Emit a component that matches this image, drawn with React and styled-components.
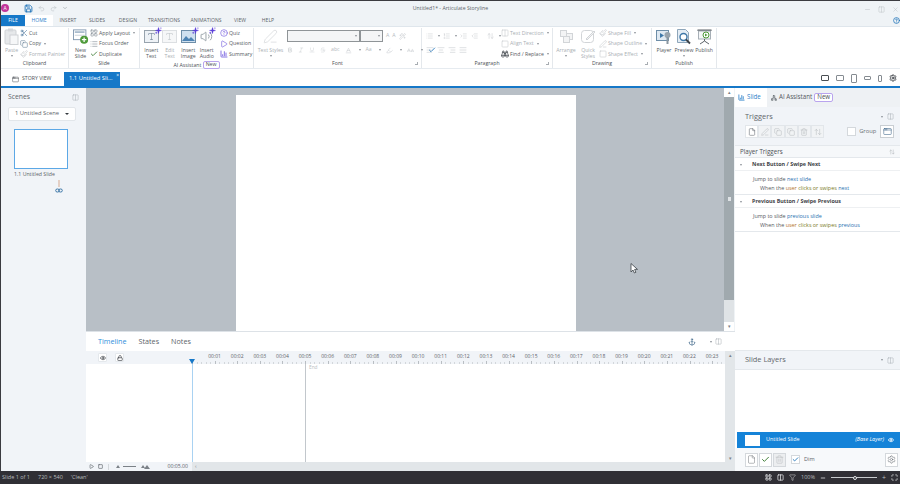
import styled, { createGlobalStyle } from "styled-components"
import {
  Scissors, Copy, Save, Undo2, Redo2, ChevronDown, Check, Eye, Lock,
  File, Trash2, Settings, Play, Square, Maximize, LayoutGrid, Columns2, Filter,
  Anchor, X, Minus, HelpCircle, Wand2, Network,
  Bold, Italic, Underline, Strikethrough, AlignLeft, AlignCenter, AlignRight, AlignJustify,
  List, ListOrdered, Binoculars, ArrowUpDown, Sparkles, PenLine, Volume2,
  Type, BarChart3, AppWindow, Paintbrush, Indent, Outdent, Baseline, Highlighter, ALargeSmall,
} from "lucide-react"

const GlobalStyle = createGlobalStyle`
  html, body { margin: 0; padding: 0; height: 484px; overflow: hidden; background: #302f35; }
  body { font-family: "Open Sans", "Liberation Sans", sans-serif; color: #55595e; }
  * { box-sizing: border-box; }
`

const TABS = [
  ["INSERT", 30], ["SLIDES", 28], ["DESIGN", 34], ["TRANSITIONS", 38],
  ["ANIMATIONS", 46], ["VIEW", 22], ["HELP", 34],
]
const SECONDS = Array.from({ length: 23 }, (_, i) => `00:${String(i + 1).padStart(2, "0")}`)
const DEVICES = [[8, 6], [8, 6], [6, 9], [7, 4], [4, 7]]

const OFF = "#c3c7cb"

const Ic = ({ as: I, c = "#6b7177", s = 8, w = 1.6 }) => <I size={s} color={c} strokeWidth={w} />

const SparkIcon = ({ children }) => (
  <IconBox>
    {children}
    <Spark><Sparkles size={7} color="#5a3fd8" fill="#5a3fd8" strokeWidth={1} /></Spark>
  </IconBox>
)

const PasteIcon = () => (
  <svg width="15" height="17" viewBox="0 0 15 17">
    <rect x="1" y="2" width="11" height="14" rx="1" fill="#e6e8ea" stroke="#cfd2d5" />
    <rect x="4" y="0.5" width="5" height="3" fill="#d5d8db" />
    <rect x="6" y="7" width="8" height="9.5" fill="#f6f7f8" stroke="#cfd2d5" />
  </svg>
)

const NewSlideIcon = () => (
  <svg width="16" height="16" viewBox="0 0 18 17">
    <rect x="0.5" y="0.5" width="14" height="11" fill="#fff" stroke="#7d95ad" />
    <rect x="2" y="2" width="11" height="2" fill="#a9bccd" />
    <rect x="2" y="6" width="11" height="1" fill="#c5ced6" />
    <circle cx="12.5" cy="11.5" r="4.5" fill="#4e9a3a" />
    <path d="M12.5 9v5M10 11.5h5" stroke="#fff" strokeWidth="1.4" />
  </svg>
)

const InsertImageIcon = () => (
  <svg width="15" height="13" viewBox="0 0 15 13">
    <rect x="0.5" y="0.5" width="14" height="12" fill="#cfe0ef" stroke="#6e8ea8" />
    <path d="M1 11l4-5 3 3 2-2 4 4z" fill="#4d83b3" />
  </svg>
)

const ArrangeIcon = () => (
  <svg width="13" height="13" viewBox="0 0 13 13" fill="#f3f4f5" stroke="#d2d5d8">
    <rect x="0.5" y="0.5" width="6" height="6" />
    <rect x="6.5" y="3.5" width="6" height="6" />
    <rect x="3.5" y="6.5" width="6" height="6" />
  </svg>
)

const QuickStylesIcon = () => (
  <svg width="15" height="15" viewBox="0 0 15 15" fill="none" stroke="#d2d5d8">
    <rect x="0.5" y="1.5" width="12" height="12" rx="3" />
    <path d="M5 10l8-8 1 1-8 8z" fill="#f3f4f5" />
  </svg>
)

const PlayerIcon = () => (
  <svg width="16" height="16" viewBox="0 0 16 16">
    <rect x="0.5" y="1.5" width="12" height="10" fill="#dfe9f2" stroke="#6e8ea8" />
    <path d="M4 4l4 2.5-4 2.5z" fill="#3f78a8" />
    <circle cx="11.5" cy="6" r="3" fill="#97a3ad" />
    <rect x="10.5" y="8" width="2" height="7" fill="#8b97a1" />
  </svg>
)

const PreviewIcon = () => (
  <svg width="16" height="16" viewBox="0 0 16 16">
    <path d="M1.5 0.5h8l3 3v10h-11z" fill="#e4edf5" stroke="#8ea6ba" />
    <circle cx="7.5" cy="8" r="3.5" fill="#fff" stroke="#3f78a8" strokeWidth="1.4" />
    <path d="M10 10.5l4 4" stroke="#3e4348" strokeWidth="1.8" />
  </svg>
)

const PublishIcon = () => (
  <svg width="15" height="16" viewBox="0 0 15 16">
    <rect x="0.5" y="0.5" width="14" height="1.5" fill="#5d6369" />
    <rect x="1.5" y="2" width="12" height="8" fill="#f4f6f8" stroke="#a7afb6" />
    <circle cx="9" cy="6" r="3" fill="#fff" stroke="#4e9a3a" />
    <path d="M8 4.5l2.5 1.5-2.500 1.5z" fill="#4e9a3a" />
    <path d="M7.5 10v2M3 15l4.5-3 4.500 3" fill="none" stroke="#5d6369" />
  </svg>
)

const SlideLink = () => (
  <svg width="8" height="13" viewBox="0 0 8 13">
    <path d="M4 0v7" stroke="#d6ab93" strokeWidth="1" />
    <rect x="0.7" y="9" width="3.6" height="3" rx="1.5" fill="none" stroke="#3f78a8" strokeWidth="1" />
    <rect x="3.7" y="9" width="3.6" height="3" rx="1.5" fill="none" stroke="#3f78a8" strokeWidth="1" />
  </svg>
)

const Cursor = () => (
  <svg width="9" height="11" viewBox="0 0 9 11">
    <path d="M1 0.5v8.5l2-2 1.4 3 1.5-.7-1.3-2.900h2.900z" fill="#fff" stroke="#3c4248" strokeWidth="0.8" />
  </svg>
)

const Big = ({ icon, top, bottom, width = 19, off, caret }) => (
  <BigButton $width={width} $off={off}>
    {icon}
    <BigLabel>{top}{bottom && <br />}{bottom}</BigLabel>
    {caret && <BigCaret />}
  </BigButton>
)

const Small = ({ icon, label, off, caret }) => (
  <SmallRow $off={off}>
    {icon}
    <span>{label}</span>
    {caret && <Caret />}
  </SmallRow>
)

const Group = ({ width, label, launcher, children }) => (
  <RibbonGroup $width={width}>
    <GroupBody>{children}</GroupBody>
    <GroupLabel>{label}{launcher && <Launcher />}</GroupLabel>
  </RibbonGroup>
)

const App = () => {
  return (
    <Frame>
      <GlobalStyle />

      <TitleBar>
        <AppDot>A</AppDot>
        <QuickTools>
          <Ic as={Save} c="#1d72b8" s={9} w={2.4} />
          <Ic as={Undo2} c="#b4b9be" s={7} />
          <Ic as={Redo2} c="#b4b9be" s={7} />
          <Ic as={ChevronDown} c="#70767c" s={6} />
        </QuickTools>
        <Title>Untitled1* - Articulate Storyline</Title>
        <WindowTools>
          <Ic as={Minus} c="#b9bec3" s={7} />
          <Ic as={Columns2} c="#b9bec3" s={7} />
          <Ic as={X} c="#b9bec3" s={7} />
        </WindowTools>
      </TitleBar>

      <TabBar>
        <FileTab>FILE</FileTab>
        <HomeTab>HOME</HomeTab>
        {TABS.map(([t, w]) => <MenuTab key={t} $width={w}>{t}</MenuTab>)}
        <Help><Ic as={HelpCircle} c="#1d72b8" s={7} w={2.6} /></Help>
      </TabBar>

      <Ribbon>
        <Group width={68} label="Clipboard">
          <Big width={17} icon={<IconBox><PasteIcon /></IconBox>} top="Paste" caret off />
          <SmallCol>
            <Small icon={<Ic as={Scissors} c="#33658f" />} label="Cut" />
            <Small icon={<Ic as={Copy} c="#5f7a92" />} label="Copy" caret />
            <Small icon={<Ic as={Paintbrush} c={OFF} />} label="Format Painter" off />
          </SmallCol>
        </Group>

        <Group width={71} label="Slide">
          <Big width={19} icon={<IconBox><NewSlideIcon /></IconBox>} top="New" bottom="Slide" />
          <SmallCol>
            <Small icon={<Ic as={LayoutGrid} c="#6f7a84" />} label="Apply Layout" caret />
            <Small icon={<Ic as={List} c="#6f7a84" />} label="Focus Order" />
            <Small icon={<Ic as={Check} c="#3f7d36" w={2.6} />} label="Duplicate" />
          </SmallCol>
        </Group>

        <Group width={114} label={<>AI Assistant <NewBadge>New</NewBadge></>}>
          <Big width={18.5} icon={<SparkIcon><Tile><Ic as={Type} c="#6f8296" s={9} /></Tile></SparkIcon>} top="Insert" bottom="Text" />
          <Big width={18.5} off icon={<IconBox><Tile $off><Ic as={Type} c={OFF} s={9} /></Tile></IconBox>} top="Edit" bottom="Text" />
          <Big width={18.5} icon={<SparkIcon><InsertImageIcon /></SparkIcon>} top="Insert" bottom="Image" />
          <Big width={18.5} icon={<SparkIcon><Ic as={Volume2} c="#8c979f" s={13} /></SparkIcon>} top="Insert" bottom="Audio" />
          <SideCol>
            <Small icon={<Ic as={HelpCircle} c="#5a3fd8" />} label="Quiz" />
            <Small icon={<Ic as={Play} c="#5a3fd8" />} label="Question" />
            <Small icon={<Ic as={BarChart3} c="#5a3fd8" w={2.2} />} label="Summary" />
          </SideCol>
        </Group>

        <Group width={168} label="Font" launcher>
          <Big width={29} off icon={<IconBox><Ic as={PenLine} c="#ced1d4" s={15} w={1} /></IconBox>} top="Text Styles" caret />
          <FontControls>
            <FontRow>
              <FontSelect $width={73}><Caret /></FontSelect>
              <FontSelect $width={23}><Caret /></FontSelect>
              <Spacer $w={3} />
              <Glyph>A</Glyph><Spacer $w={3} /><Glyph>A</Glyph><Spacer $w={3} />
              <Ic as={Wand2} c={OFF} s={7} />
            </FontRow>
            <FontRow $gap={5}>
              <Ic as={Bold} c={OFF} s={6} w={2.4} />
              <Ic as={Italic} c={OFF} s={6} />
              <Ic as={Underline} c={OFF} s={6} />
              <Ic as={Strikethrough} c={OFF} s={6} />
              <Glyph>abc</Glyph>
              <Ic as={Baseline} c={OFF} s={7} /><Caret />
              <Glyph>Aa</Glyph><Caret />
              <Ic as={Highlighter} c={OFF} s={7} /><Caret />
              <Ic as={ALargeSmall} c={OFF} s={7} /><Caret />
              <Ic as={Check} c="#1d72b8" s={8} w={2.6} />
            </FontRow>
          </FontControls>
        </Group>

        <Group width={131} label="Paragraph" launcher>
          <ParaControls>
            <FontRow $gap={3}>
              <Ic as={List} c={OFF} /><Caret />
              <Ic as={ListOrdered} c={OFF} /><Caret />
              <Ic as={Indent} c={OFF} /><Ic as={Outdent} c={OFF} />
              <Spacer $w={3} />
              <Ic as={ArrowUpDown} c={OFF} /><Caret />
            </FontRow>
            <FontRow $gap={3}>
              <Ic as={AlignLeft} c={OFF} /><Ic as={AlignCenter} c={OFF} />
              <Ic as={AlignRight} c={OFF} /><Ic as={AlignJustify} c={OFF} />
            </FontRow>
          </ParaControls>
          <SmallCol>
            <Small icon={<Ic as={Columns2} c={OFF} />} label="Text Direction" off caret />
            <Small icon={<Ic as={Square} c={OFF} />} label="Align Text" off caret />
            <Small icon={<Ic as={Binoculars} c="#3e4348" w={2.2} />} label="Find / Replace" caret />
          </SmallCol>
        </Group>

        <Group width={99} label="Drawing" launcher>
          <Big width={22} off icon={<IconBox><ArrangeIcon /></IconBox>} top="Arrange" caret />
          <Big width={22} off icon={<IconBox><QuickStylesIcon /></IconBox>} top="Quick" bottom="Styles" />
          <SmallCol>
            <Small icon={<Ic as={Paintbrush} c={OFF} />} label="Shape Fill" off caret />
            <Small icon={<Ic as={PenLine} c={OFF} />} label="Shape Outline" off caret />
            <Small icon={<Ic as={Square} c={OFF} />} label="Shape Effect" off caret />
          </SmallCol>
        </Group>

        <Group width={65} label="Publish">
          <Big width={20} icon={<IconBox><PlayerIcon /></IconBox>} top="Player" />
          <Big width={20} icon={<IconBox><PreviewIcon /></IconBox>} top="Preview" caret />
          <Big width={20} icon={<IconBox><PublishIcon /></IconBox>} top="Publish" />
        </Group>
      </Ribbon>

      <DocBar>
        <StoryTab><Ic as={AppWindow} c="#43484d" s={7} />STORY VIEW</StoryTab>
        <SlideTab>1.1 Untitled Sli...<TabClose>×</TabClose></SlideTab>
        <Devices>
          {DEVICES.map(([w, h], i) => <Device key={i} $w={w} $h={h} $on={i === 0} />)}
          <Ic as={Settings} c="#33383d" s={8} w={2.6} />
        </Devices>
      </DocBar>

      <Main>
        <ScenesPanel>
          <ScenesHead>Scenes<Ic as={Columns2} c="#a3a9af" s={7} /></ScenesHead>
          <SceneSelect>1 Untitled Scene<DarkCaret /></SceneSelect>
          <Thumb />
          <ThumbCaption>1.1 Untitled Slide</ThumbCaption>
          <LinkRow><SlideLink /></LinkRow>
        </ScenesPanel>

        <Center>
          <CanvasRow>
            <Canvas>
              <SlidePage />
              <CursorSpot><Cursor /></CursorSpot>
            </Canvas>
            <CanvasScroll>
              <ScrollEnd>▴</ScrollEnd>
              <ScrollThumb><Grip /></ScrollThumb>
              <ScrollTrack />
              <ScrollEnd>▾</ScrollEnd>
            </CanvasScroll>
          </CanvasRow>

          <Timeline>
            <TimelineHead>
              <TimelineTab $active>Timeline</TimelineTab>
              <TimelineTab>States</TimelineTab>
              <TimelineTab>Notes</TimelineTab>
              <TimelineTools>
                <Ic as={Anchor} c="#4a6f90" s={8} w={2} />
                <Spacer $w={6} />
                <Caret />
                <Ic as={Columns2} c="#a3a9af" s={7} />
              </TimelineTools>
            </TimelineHead>
            <TimelineGrid>
              <TimelineMain>
                <RulerRow>
                  <RulerTools>
                    <ToolChip><Ic as={Eye} c="#3e4348" s={6} w={2.6} /></ToolChip>
                    <ToolChip><Ic as={Lock} c="#3e4348" s={6} w={2.6} /></ToolChip>
                  </RulerTools>
                  <Ruler>
                    {SECONDS.map(s => <RulerLabel key={s}>{s}</RulerLabel>)}
                  </Ruler>
                  <Playhead />
                </RulerRow>
                <TrackArea>
                  <TrackNames />
                  <Tracks>
                    <EndMark>End</EndMark>
                  </Tracks>
                </TrackArea>
                <TimelineFoot>
                  <FootTools>
                    <Ic as={Play} c="#5d6369" s={5} w={3} />
                    <Spacer $w={4} />
                    <Ic as={Square} c="#5d6369" s={5} w={3} />
                    <FootSep />
                    <Tri />
                    <ZoomTrack />
                    <Tri /><Tri $big />
                    <FootTime>00:05.00</FootTime>
                  </FootTools>
                  <HScroll>‹</HScroll>
                </TimelineFoot>
              </TimelineMain>
              <VScroll><span>▴</span><span>▾</span></VScroll>
            </TimelineGrid>
          </Timeline>
        </Center>

        <SidePanel>
          <SideTabs>
            <SideTab $active><Ic as={BarChart3} c="#2c81c9" s={7} w={2.8} />Slide</SideTab>
            <SideTab><Ic as={Network} c="#5d6369" s={6} w={2.4} />AI Assistant <NewBadge>New</NewBadge></SideTab>
          </SideTabs>

          <TriggersBox>
            <PanelHead>Triggers<HeadTools><Caret /><Ic as={Columns2} c="#a3a9af" s={7} /></HeadTools></PanelHead>
            <TriggerTools>
              <ToolGroup>
                <SquareTool><Ic as={File} c="#5d6369" /></SquareTool>
                <SquareTool $off><Ic as={PenLine} c="#b9bdc1" /></SquareTool>
                <SquareTool $off><Ic as={Copy} c="#b9bdc1" /></SquareTool>
                <SquareTool $off><Ic as={Copy} c="#b9bdc1" /></SquareTool>
                <SquareTool $off><Ic as={Trash2} c="#b9bdc1" /></SquareTool>
                <SquareTool $off><Ic as={ArrowUpDown} c="#b9bdc1" /></SquareTool>
              </ToolGroup>
              <GroupCheck><CheckBox />Group</GroupCheck>
              <CalendarBtn><Ic as={AppWindow} c="#4a6f90" s={9} /></CalendarBtn>
            </TriggerTools>
          </TriggersBox>

          <SectionBar>Player Triggers<Ic as={ArrowUpDown} c="#a3a9af" s={6} /></SectionBar>

          <TriggerHead><TinyCaret />Next Button / Swipe Next</TriggerHead>
          <TriggerBody>
            <Line>Jump to slide <B>next slide</B></Line>
            <Line $indent>When the <O>user</O> <Y>clicks or swipes</Y> <B>next</B></Line>
          </TriggerBody>
          <TriggerHead><TinyCaret />Previous Button / Swipe Previous</TriggerHead>
          <TriggerBody>
            <Line>Jump to slide <B>previous slide</B></Line>
            <Line $indent>When the <O>user</O> <Y>clicks or swipes</Y> <B>previous</B></Line>
          </TriggerBody>

          <Flex />

          <LayersHead>Slide Layers<HeadTools><Caret /><Ic as={Columns2} c="#a3a9af" s={7} /></HeadTools></LayersHead>
          <LayersSpace />
          <LayerRow>
            <LayerThumb />
            <LayerName>Untitled Slide</LayerName>
            <LayerBase>(Base Layer)</LayerBase>
            <Ic as={Eye} c="#fff" s={6} w={3} />
          </LayerRow>
          <LayerTools>
            <LayerBtn><Ic as={File} c="#5d6369" s={9} w={1.2} /></LayerBtn>
            <LayerBtn><Ic as={Check} c="#3f7d36" s={9} w={2.6} /></LayerBtn>
            <LayerBtn $off><Ic as={Trash2} c="#b0b4b8" s={9} w={1.2} /></LayerBtn>
            <DimCheck><Ic as={Check} c="#1d72b8" s={7} w={3} /></DimCheck>
            <span>Dim</span>
            <Flex />
            <LayerBtn><Ic as={Settings} c="#6b7177" s={9} /></LayerBtn>
          </LayerTools>
        </SidePanel>
      </Main>

      <StatusBar>
        <span>Slide 1 of 1</span>
        <span>720 × 540</span>
        <span>'Clean'</span>
        <StatusRight>
          <Ic as={LayoutGrid} c="#e4e6e8" s={7} w={2.6} />
          <Ic as={Columns2} c="#e4e6e8" s={7} w={2.6} />
          <Ic as={Filter} c="#e4e6e8" s={7} />
          <span>100%</span>
          <Ic as={Minus} c="#e4e6e8" s={6} w={3} />
          <ZoomSlider><ZoomKnob /></ZoomSlider>
          <PlusSign>+</PlusSign>
          <Ic as={Maximize} c="#e4e6e8" s={7} w={2.4} />
        </StatusRight>
      </StatusBar>
    </Frame>
  )
}

export default App

const Frame = styled.div`
  width: 900px;
  height: 484px;
  display: flex;
  flex-direction: column;
  background: #eff3f6;
  border-top: 1px solid #3b3b40;
  border-left: 1px solid #3b3b40;
  font-size: 5.2px;
  line-height: 1;
`

const TitleBar = styled.div`
  height: 14px;
  flex: none;
  display: flex;
  align-items: center;
  position: relative;
`

const AppDot = styled.div`
  width: 8px;
  height: 8px;
  border-radius: 50%;
  background: #c2359a;
  color: #fff;
  font-size: 5px;
  text-align: center;
  line-height: 8px;
  margin-right: 15px;
`

const QuickTools = styled.div`
  display: flex;
  align-items: center;
  gap: 5px;
`

const Title = styled.div`
  position: absolute;
  left: 0;
  right: 0;
  top: 5px;
  text-align: center;
  font-size: 5.2px;
  color: #5d6369;
`

const WindowTools = styled.div`
  margin-left: auto;
  display: flex;
  gap: 7px;
  padding-right: 1px;
  margin-top: 3px;
`

const TabBar = styled.div`
  height: 11px;
  flex: none;
  display: flex;
  align-items: stretch;
  font-size: 5.1px;
`

const FileTab = styled.div`
  width: 24px;
  background: #1678c8;
  color: #fff;
  display: flex;
  align-items: center;
  justify-content: center;
`

const HomeTab = styled.div`
  width: 28px;
  background: #fff;
  color: #2c81c9;
  display: flex;
  align-items: center;
  justify-content: center;
`

const MenuTab = styled.div`
  width: ${p => p.$width}px;
  display: flex;
  align-items: center;
  justify-content: center;
  white-space: nowrap;
  color: #5d6369;
`

const Help = styled.div`
  margin-left: auto;
  display: flex;
  align-items: center;
`

const Ribbon = styled.div`
  height: 43px;
  flex: none;
  background: #fff;
  display: flex;
  border-top: 1px solid #dfe6ec;
  border-bottom: 1px solid #e6ebf0;
  padding-top: 1px;
`

const RibbonGroup = styled.div`
  width: ${p => p.$width}px;
  flex: none;
  display: flex;
  flex-direction: column;
  border-right: 1px solid #e4e8ec;
  padding: 0 2px;
`

const GroupBody = styled.div`
  flex: 1;
  display: flex;
  min-height: 0;
`

const GroupLabel = styled.div`
  height: 9px;
  padding-top: 1.5px;
  text-align: center;
  white-space: nowrap;
  color: #4a4f54;
  position: relative;
`

const Launcher = styled.i`
  position: absolute;
  right: 1px;
  top: 3px;
  width: 3px;
  height: 3px;
  border-right: 1px solid #a8adb2;
  border-bottom: 1px solid #a8adb2;
`

const NewBadge = styled.span`
  display: inline-block;
  padding: 0.5px 2px;
  border: 1px solid #b9a4ee;
  border-radius: 2px;
  background: #fff;
  color: #4a4f54;
`

const BigButton = styled.div`
  width: ${p => p.$width}px;
  flex: none;
  display: flex;
  flex-direction: column;
  align-items: center;
  white-space: nowrap;
  color: ${p => (p.$off ? "#a9aeb3" : "#55595e")};
`

const BigLabel = styled.div`
  line-height: 6px;
  text-align: center;
`

const IconBox = styled.div`
  height: 17px;
  margin-bottom: 1.5px;
  display: flex;
  align-items: center;
  justify-content: center;
  position: relative;
`

const Spark = styled.div`
  position: absolute;
  top: -1px;
  right: -3px;
  line-height: 0;
`

const Tile = styled.div`
  width: 15px;
  height: 13px;
  background: ${p => (p.$off ? "#f6f7f8" : "#eef2f6")};
  border: 1px solid ${p => (p.$off ? "#dcdfe2" : "#98a3ad")};
  display: flex;
  align-items: center;
  justify-content: center;
`

const SmallCol = styled.div`
  display: flex;
  flex-direction: column;
  gap: 2px;
  padding-top: 1px;
`

const SideCol = styled(SmallCol)`
  margin-left: 4px;
`

const SmallRow = styled.div`
  height: 8.5px;
  display: flex;
  align-items: center;
  gap: 1px;
  white-space: nowrap;
  color: ${p => (p.$off ? "#a9aeb3" : "#55595e")};
`

const Caret = styled.i`
  width: 0;
  height: 0;
  margin-left: 2px;
  border-left: 1.5px solid transparent;
  border-right: 1.5px solid transparent;
  border-top: 2px solid #8a9096;
`

const BigCaret = styled(Caret)`
  margin: 2px 0 0;
`

const DarkCaret = styled(Caret)`
  border-left-width: 2px;
  border-right-width: 2px;
  border-top: 2.5px solid #33383d;
  margin-left: auto;
`

const FontControls = styled.div`
  display: flex;
  flex-direction: column;
  gap: 2px;
  padding-top: 2px;
  margin-left: 2px;
`

const ParaControls = styled(FontControls)`
  width: 75px;
  flex: none;
`

const FontRow = styled.div`
  display: flex;
  align-items: center;
  gap: ${p => p.$gap ?? 0}px;
  height: 12px;
  white-space: nowrap;
`

const FontSelect = styled.div`
  width: ${p => p.$width}px;
  height: 12px;
  border: 1px solid #8f9497;
  background: #f4f5f6;
  display: flex;
  align-items: center;
  justify-content: flex-end;
  padding-right: 2px;
`

const Glyph = styled.span`
  color: #b4b9be;
`

const Spacer = styled.i`
  width: ${p => p.$w}px;
  flex: none;
`

const DocBar = styled.div`
  height: 19px;
  flex: none;
  background: #fff;
  display: flex;
  align-items: flex-end;
  border-bottom: 2px solid #1678c8;
`

const StoryTab = styled.div`
  width: 63px;
  height: 14px;
  padding-left: 11px;
  display: flex;
  align-items: center;
  gap: 3px;
  color: #4a4f54;
`

const SlideTab = styled.div`
  width: 56px;
  height: 14px;
  background: #1678c8;
  color: #fff;
  font-size: 5.8px;
  display: flex;
  align-items: center;
  padding-left: 5px;
  position: relative;
`

const TabClose = styled.span`
  position: absolute;
  right: 1px;
  top: 1px;
  font-size: 5px;
`

const Devices = styled.div`
  margin-left: auto;
  margin-bottom: 1px;
  height: 14px;
  display: flex;
  align-items: center;
  gap: 7px;
  padding-right: 3px;
`

const Device = styled.i`
  width: ${p => p.$w}px;
  height: ${p => p.$h}px;
  border: 1px solid ${p => (p.$on ? "#4a4f54" : "#858b91")};
  border-radius: 1px;
`

const Main = styled.div`
  flex: 1;
  min-height: 0;
  display: flex;
`

const ScenesPanel = styled.div`
  width: 85px;
  flex: none;
  background: #f1f4f8;
  padding: 6px 7px;
  display: flex;
  flex-direction: column;
`

const ScenesHead = styled.div`
  display: flex;
  justify-content: space-between;
  align-items: center;
  height: 7px;
  font-size: 6.8px;
  color: #62676c;
  margin-bottom: 6px;
`

const SceneSelect = styled.div`
  width: 68px;
  height: 14px;
  background: #fff;
  border: 1px solid #e2e6ea;
  border-radius: 2px;
  display: flex;
  align-items: center;
  padding: 0 6px;
  font-size: 5.8px;
  color: #5d6369;
`

const Thumb = styled.div`
  width: 54px;
  height: 40px;
  margin: 8px 0 0 6px;
  background: #fff;
  border: 1px solid #5ca8e6;
`

const ThumbCaption = styled.div`
  margin: 3px 0 0 6px;
  color: #5d6369;
`

const LinkRow = styled.div`
  margin: 3px 0 0 47px;
  line-height: 0;
`

const Center = styled.div`
  width: 649px;
  flex: none;
  display: flex;
  flex-direction: column;
  min-height: 0;
`

const CanvasRow = styled.div`
  height: 243px;
  display: flex;
  flex: none;
`

const Canvas = styled.div`
  width: 638px;
  background: #b8bfc6;
  padding: 7px 0 0 150px;
  position: relative;
  overflow: hidden;
`

const SlidePage = styled.div`
  width: 340px;
  height: 240px;
  background: #fff;
`

const CursorSpot = styled.div`
  position: absolute;
  left: 544px;
  top: 175px;
  line-height: 0;
`

const CanvasScroll = styled.div`
  width: 10px;
  display: flex;
  flex-direction: column;
  font-size: 5px;
`

const ScrollEnd = styled.div`
  height: 9px;
  background: #fff;
  color: #7b8187;
  text-align: center;
  line-height: 9px;
`

const ScrollThumb = styled.div`
  height: 203px;
  background: #a0a9ae;
  display: flex;
  align-items: center;
  justify-content: center;
`

const ScrollTrack = styled.div`
  flex: 1;
  background: #dfe3e6;
`

const Grip = styled.i`
  width: 3px;
  height: 4px;
  background: #dfe3e6;
`

const Timeline = styled.div`
  flex: 1;
  min-height: 0;
  background: #fff;
  display: flex;
  flex-direction: column;
  border-top: 1px solid #dde2e7;
`

const TimelineHead = styled.div`
  height: 19px;
  flex: none;
  display: flex;
  align-items: center;
  gap: 12px;
  padding: 0 13px 0 12px;
`

const TimelineTab = styled.div`
  font-size: 7.2px;
  color: ${p => (p.$active ? "#2f8fdc" : "#5d6369")};
`

const TimelineTools = styled.div`
  margin-left: auto;
  display: flex;
  align-items: center;
  gap: 3px;
`

const TimelineGrid = styled.div`
  flex: 1;
  min-height: 0;
  display: flex;
`

const TimelineMain = styled.div`
  flex: 1;
  min-width: 0;
  display: flex;
  flex-direction: column;
`

const RulerRow = styled.div`
  height: 13px;
  flex: none;
  display: flex;
  background: #f1f4f8;
  position: relative;
`

const RulerTools = styled.div`
  width: 106px;
  flex: none;
  display: flex;
  align-items: center;
  gap: 8px;
  padding-left: 12px;
`

const ToolChip = styled.div`
  width: 9px;
  height: 9px;
  background: #fff;
  border: 1px solid #e4e8ec;
  border-radius: 1px;
  display: flex;
  align-items: center;
  justify-content: center;
`

const Ruler = styled.div`
  flex: 1;
  display: flex;
  padding: 2.5px 0 0 11.3px;
  overflow: hidden;
  background-image:
    repeating-linear-gradient(90deg, #b9bec3 0 1px, transparent 1px 22.62px),
    repeating-linear-gradient(90deg, #d3d7db 0 1px, transparent 1px 4.524px);
  background-size: 100% 3px, 100% 2px;
  background-position: bottom;
  background-repeat: no-repeat;
`

const RulerLabel = styled.div`
  width: 22.62px;
  flex: none;
  text-align: center;
  font-size: 5px;
  color: #5d6369;
`

const Playhead = styled.i`
  position: absolute;
  left: 103px;
  bottom: 0;
  width: 0;
  height: 0;
  border-left: 3.5px solid transparent;
  border-right: 3.5px solid transparent;
  border-top: 5px solid #1678c8;
`

const TrackArea = styled.div`
  flex: 1;
  min-height: 0;
  display: flex;
`

const TrackNames = styled.div`
  width: 107px;
  flex: none;
  border-right: 1px solid #a9d2f2;
`

const Tracks = styled.div`
  flex: 1;
  position: relative;
`

const EndMark = styled.div`
  position: absolute;
  left: 112px;
  top: 0;
  height: 100%;
  border-left: 1px solid #c2c7cc;
  padding: 1px 0 0 3px;
  font-size: 4.8px;
  color: #b9bdc1;
`

const TimelineFoot = styled.div`
  height: 9px;
  flex: none;
  display: flex;
  background: #e2e6e9;
`

const FootTools = styled.div`
  width: 106px;
  flex: none;
  display: flex;
  align-items: center;
  padding-left: 3px;
  background: #f1f4f8;
`

const FootSep = styled.i`
  width: 1px;
  height: 6px;
  background: #d3d7db;
  margin: 0 7px 0 5px;
`

const Tri = styled.i`
  width: 0;
  height: 0;
  margin-right: ${p => (p.$big ? 0 : -1)}px;
  border-left: ${p => (p.$big ? 3 : 2.5)}px solid transparent;
  border-right: ${p => (p.$big ? 3 : 2.5)}px solid transparent;
  border-bottom: ${p => (p.$big ? 4 : 3)}px solid #7b8187;
`

const ZoomTrack = styled.i`
  width: 13px;
  height: 1px;
  margin: 0 5px 0 4px;
  background: #7b8187;
`

const FootTime = styled.span`
  margin: 0 4px 0 auto;
  color: #5d6369;
`

const HScroll = styled.div`
  padding-left: 3px;
  line-height: 8px;
  color: #7b8187;
`

const VScroll = styled.div`
  width: 10px;
  flex: none;
  background: #e2e6e9;
  display: flex;
  flex-direction: column;
  justify-content: space-between;
  text-align: center;
  font-size: 4.6px;
  color: #7b8187;
  padding: 2px 0 10px;
`

const SidePanel = styled.div`
  flex: 1;
  min-width: 0;
  background: #fff;
  display: flex;
  flex-direction: column;
`

const SideTabs = styled.div`
  height: 19px;
  flex: none;
  display: flex;
  background: #eef1f4;
`

const SideTab = styled.div`
  width: ${p => (p.$active ? "32px" : "auto")};
  padding: 0 ${p => (p.$active ? 0 : 3)}px 0 ${p => (p.$active ? 3 : 4)}px;
  display: flex;
  align-items: center;
  gap: 2px;
  font-size: 6.2px;
  background: ${p => (p.$active ? "#fff" : "transparent")};
  color: ${p => (p.$active ? "#2c81c9" : "#55595e")};
`

const TriggersBox = styled.div`
  height: 38px;
  flex: none;
  background: #f1f4f8;
  padding: 6px 5px 0 10px;
`

const PanelHead = styled.div`
  display: flex;
  justify-content: space-between;
  align-items: center;
  font-size: 7.4px;
  color: #62676c;
  padding-right: 1px;
`

const HeadTools = styled.div`
  display: flex;
  align-items: center;
  gap: 4px;
`

const TriggerTools = styled.div`
  display: flex;
  align-items: center;
  margin-top: 5px;
`

const ToolGroup = styled.div`
  display: flex;
`

const SquareTool = styled.div`
  width: 13.2px;
  height: 13px;
  background: ${p => (p.$off ? "#f1f3f5" : "#fff")};
  border: 1px solid #e2e6ea;
  display: flex;
  align-items: center;
  justify-content: center;
`

const GroupCheck = styled.div`
  display: flex;
  align-items: center;
  gap: 3px;
  margin-left: 23px;
  font-size: 5.8px;
  color: #6b7177;
`

const CheckBox = styled.i`
  width: 9px;
  height: 9px;
  background: #fff;
  border: 1px solid #d4d8dc;
`

const CalendarBtn = styled.div`
  width: 14px;
  height: 13px;
  margin-left: 4px;
  background: #fff;
  border: 1px solid #c9ced3;
  display: flex;
  align-items: center;
  justify-content: center;
`

const SectionBar = styled.div`
  height: 13px;
  flex: none;
  display: flex;
  align-items: center;
  justify-content: space-between;
  padding: 1px 5px 0;
  font-size: 6.2px;
  color: #4a4f54;
  background: #f6f8fa;
  border-top: 1px solid #e4e8ec;
  border-bottom: 1px solid #e4e8ec;
`

const TriggerHead = styled.div`
  height: 13px;
  flex: none;
  display: flex;
  align-items: center;
  padding: 1px 0 0 5px;
  gap: 10px;
  font-weight: 700;
  font-size: 5.4px;
  color: #3f4448;
  border-bottom: 1px solid #eef0f2;
`

const TinyCaret = styled.i`
  width: 0;
  height: 0;
  border-left: 1.5px solid transparent;
  border-right: 1.5px solid transparent;
  border-top: 2px solid #8a9096;
`

const TriggerBody = styled.div`
  height: 24px;
  flex: none;
  padding: 5.5px 0 0 18px;
  display: flex;
  flex-direction: column;
  gap: 4px;
  font-size: 5.4px;
  border-bottom: 1px solid #e4e8ec;
  color: #55595e;
`

const Line = styled.div`
  padding-left: ${p => (p.$indent ? 7 : 0)}px;
  white-space: nowrap;
`

const B = styled.span`color: #2a6fb0;`
const O = styled.span`color: #b5702a;`
const Y = styled.span`color: #7a7a1e;`

const Flex = styled.div`
  flex: 1;
`

const LayersHead = styled(PanelHead)`
  height: 20px;
  flex: none;
  padding: 0 6px 0 10px;
  background: #f1f4f8;
  border-top: 1px solid #e4e8ec;
  border-bottom: 1px solid #e4e8ec;
`

const LayersSpace = styled.div`
  height: 62px;
  flex: none;
`

const LayerRow = styled.div`
  height: 16px;
  flex: none;
  margin-left: 2px;
  background: #1583d8;
  color: #fff;
  display: flex;
  align-items: center;
  padding: 0 6px 0 8px;
`

const LayerThumb = styled.i`
  width: 15px;
  height: 11px;
  background: #fff;
`

const LayerName = styled.span`
  margin-left: 6px;
  font-size: 5.4px;
`

const LayerBase = styled.span`
  margin: 0 4px 0 auto;
  font-style: italic;
  font-size: 5.4px;
`

const LayerTools = styled.div`
  height: 23px;
  flex: none;
  display: flex;
  align-items: center;
  padding: 0 2px 0 10px;
  gap: 1px;
  background: #f7f9fb;
  font-size: 5.6px;
  color: #5d6369;
`

const LayerBtn = styled.div`
  width: 13px;
  height: 14px;
  background: ${p => (p.$off ? "#eceef0" : "#fff")};
  border: 1px solid #d4d8dc;
  display: flex;
  align-items: center;
  justify-content: center;
`

const DimCheck = styled.div`
  width: 9px;
  height: 9px;
  margin: 0 3px 0 4px;
  background: #fff;
  border: 1px solid #d4d8dc;
  display: flex;
  align-items: center;
  justify-content: center;
`

const StatusBar = styled.div`
  height: 13px;
  flex: none;
  margin-left: -1px;
  padding: 0 0 0 2px;
  background: #302f35;
  color: #b9bbbe;
  display: flex;
  align-items: center;
  gap: 8px;
  font-size: 5.5px;
`

const StatusRight = styled.div`
  margin-left: auto;
  display: flex;
  align-items: center;
  gap: 5px;
  padding-right: 2px;
`

const ZoomSlider = styled.div`
  width: 46px;
  height: 1px;
  background: #c9cbce;
  position: relative;
`

const ZoomKnob = styled.i`
  position: absolute;
  left: 22px;
  top: -1.5px;
  width: 4px;
  height: 4px;
  border-radius: 50%;
  background: #302f35;
  border: 1px solid #e4e6e8;
`

const PlusSign = styled.span`
  font-size: 7px;
`
